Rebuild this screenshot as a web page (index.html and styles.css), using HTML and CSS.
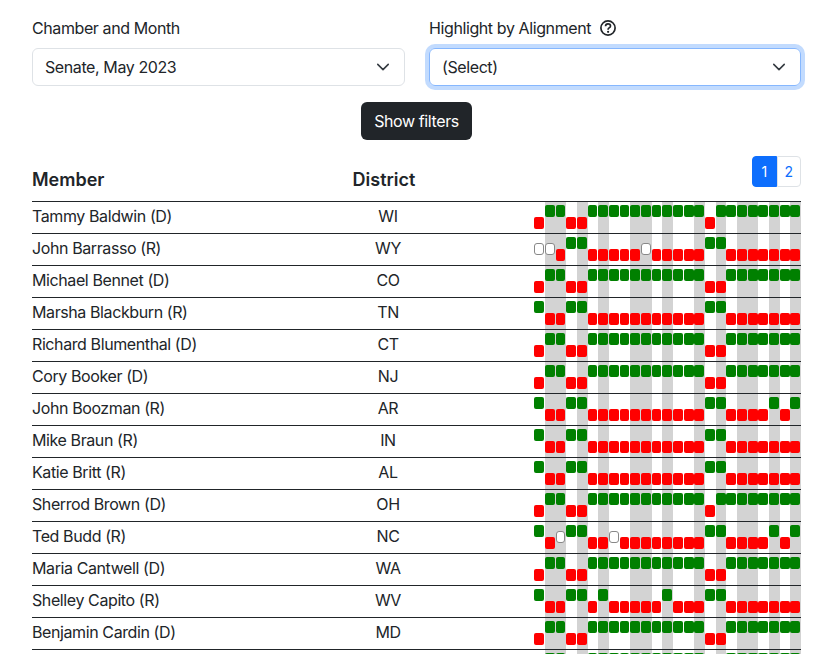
FILE: index.html
```html
<!DOCTYPE html>
<html>
<head>
    <meta charset="UTF-8">
    <title>Senate votes</title>
    <link rel="stylesheet" href="styles.css">
</head>
<body>

    <div class="filters">
        <div class="filter">
            <label class="filter-label">Chamber and Month</label>
            <div class="select-box">
                <span>Senate, May 2023</span>
                <svg class="chevron" viewBox="0 0 16 16"><path d="M2 5l6 6 6-6" /></svg>
            </div>
        </div>
        <div class="filter">
            <label class="filter-label">Highlight by Alignment
                <svg class="help-icon" viewBox="0 0 16 16">
                    <circle cx="8" cy="8" r="7.1" />
                    <path d="M5.5 6.2c.1-1.6 1.2-2.4 2.5-2.4s2.5.8 2.5 2.1c0 1-.6 1.5-1.4 2-.7.5-1 .8-1 1.5v.3" />
                    <circle class="help-dot" cx="8.1" cy="11.8" r="1.1" />
                </svg>
            </label>
            <div class="select-box focused">
                <span>(Select)</span>
                <svg class="chevron" viewBox="0 0 16 16"><path d="M2 5l6 6 6-6" /></svg>
            </div>
        </div>
    </div>

    <div class="button-row">
        <button class="dark-button">Show filters</button>
    </div>

    <div class="table-head">
        <div class="col-member">Member</div>
        <div class="col-district">District</div>
        <div class="pager">
            <a href="#" class="page-link active">1</a>
            <a href="#" class="page-link">2</a>
        </div>
    </div>

    <div id="members"></div>

    <script src="script.js"></script>

</body>
</html>
```

FILE: styles.css
```css
html {
    overflow: hidden;
}

body {
    margin: 0;
    padding: 16px 21px 0 32px;
    background-color: white;
    color: #212529;
    font-family: Inter, "Liberation Sans", sans-serif;
    font-size: 16px;
    line-height: 24px;
    letter-spacing: -0.4px;
}

.filters {
    display: grid;
    grid-template-columns: 373px 372px;
    column-gap: 24px;
}

.filter-label {
    display: flex;
    align-items: center;
    gap: 9px;
    margin-bottom: 8px;
}

.help-icon {
    width: 16px;
    height: 16px;
    fill: none;
    stroke: #212529;
    stroke-width: 1.7;
}

.help-dot {
    fill: #212529;
    stroke: none;
}

.select-box {
    display: flex;
    align-items: center;
    justify-content: space-between;
    height: 38px;
    box-sizing: border-box;
    padding: 0 14px 0 12px;
    border: 1px solid #dee2e6;
    border-radius: 6px;
}

.select-box.focused {
    border-color: #86b7fe;
    box-shadow: 0 0 0 4px rgba(13, 110, 253, 0.25);
}

.chevron {
    width: 14px;
    height: 14px;
    fill: none;
    stroke: #343a40;
    stroke-width: 1.8;
    stroke-linecap: round;
    stroke-linejoin: round;
}

.button-row {
    display: flex;
    justify-content: center;
    margin-top: 16px;
}

.dark-button {
    height: 38px;
    padding: 0 13px;
    border: none;
    border-radius: 6px;
    background-color: #212529;
    color: white;
    font-family: inherit;
    font-size: 16px;
    letter-spacing: inherit;
}

.table-head,
.member-row {
    display: grid;
    grid-template-columns: 300px 104px 1fr;
}

.table-head {
    height: 46px;
    margin-top: 16px;
    font-size: 18px;
    font-weight: 600;
    letter-spacing: 0;
    border-bottom: 1px solid #212529;
    box-sizing: border-box;
}

.col-member,
.col-district {
    padding-top: 12px;
}

.col-district {
    text-align: center;
}

.pager {
    display: flex;
    justify-content: flex-end;
}

.page-link {
    width: 24.5px;
    height: 31px;
    box-sizing: border-box;
    border: 1px solid #dee2e6;
    color: #0d6efd;
    font-size: 14px;
    font-weight: 400;
    line-height: 29px;
    text-align: center;
    text-decoration: none;
    border-radius: 0 4px 4px 0;
}

.page-link.active {
    border-color: #0d6efd;
    background-color: #0d6efd;
    color: white;
    border-radius: 4px 0 0 4px;
}

.member-row {
    height: 32px;
    box-sizing: border-box;
    border-bottom: 1px solid #212529;
}

.member-name,
.member-district {
    padding-top: 2px;
}

.member-district {
    padding-left: 8px;
    text-align: center;
}

.votes {
    display: grid;
    grid-template-columns: repeat(25, 10.68px);
    justify-content: end;
}

.vote {
    position: relative;
}

.vote.shaded {
    background-color: lightgray;
}

.vote i {
    position: absolute;
    left: 0;
    width: 9.9px;
    height: 12px;
    box-sizing: border-box;
    border-radius: 2px;
}

.vote .yes {
    top: 3px;
    background-color: green;
}

.vote .no {
    top: 15px;
    background-color: red;
}

.vote .absent {
    top: 9px;
    background-color: white;
    border: 1px solid #888;
    border-radius: 3px;
}
```

FILE: script.js
```js
// g = yes, r = no, o = did not vote
const DEM = 'rggrrgggggggggggrrggggggg';
const DEM2 = 'rggrrgggggggggggrgggggggg';
const GOP = 'grrggrrrrrrrrrrrggrrrrrrr';

const members = [
    ['Tammy Baldwin (D)', 'WI', DEM2],
    ['John Barrasso (R)', 'WY', 'oorggrrrrrorrrrrggrrrrrrr'],
    ['Michael Bennet (D)', 'CO', DEM],
    ['Marsha Blackburn (R)', 'TN', GOP],
    ['Richard Blumenthal (D)', 'CT', DEM],
    ['Cory Booker (D)', 'NJ', DEM],
    ['John Boozman (R)', 'AR', 'grrggrrrrrrrrrrrggrrrrgrg'],
    ['Mike Braun (R)', 'IN', GOP],
    ['Katie Britt (R)', 'AL', GOP],
    ['Sherrod Brown (D)', 'OH', DEM2],
    ['Ted Budd (R)', 'NC', 'groggrrorrrrrrrrggrrrrgrg'],
    ['Maria Cantwell (D)', 'WA', DEM],
    ['Shelley Capito (R)', 'WV', 'grrggrgrrrrrgrrrggrrrrrrr'],
    ['Benjamin Cardin (D)', 'MD', DEM],
    ['', '', DEM]
];

// columns that get the grey stripe
const shaded = [1, 2, 4, 6, 9, 10, 12, 15, 17, 19, 20, 22, 24];
const kinds = { g: 'yes', r: 'no', o: 'absent' };

const list = document.getElementById('members');

members.forEach(m => {
    const cells = m[2].split('').map((v, i) => {
        const stripe = shaded.includes(i) ? ' shaded' : '';
        return '<div class="vote' + stripe + '"><i class="' + kinds[v] + '"></i></div>';
    });

    const row = document.createElement('div');
    row.className = 'member-row';
    row.innerHTML = '<div class="member-name">' + m[0] + '</div>'
        + '<div class="member-district">' + m[1] + '</div>'
        + '<div class="votes">' + cells.join('') + '</div>';
    list.appendChild(row);
});
```
